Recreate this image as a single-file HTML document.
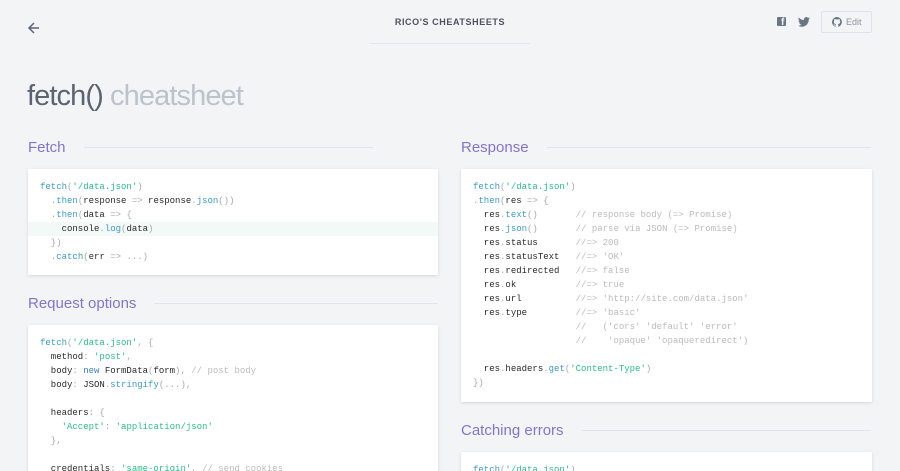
<!DOCTYPE html>
<html><head><meta charset="utf-8"><style>
*{margin:0;padding:0;box-sizing:border-box}
html,body{width:900px;height:471px;overflow:hidden}
body{background:#f3f4f6;font-family:"Liberation Sans",sans-serif;position:relative}
.abs{position:absolute}
.h{position:absolute;font-size:15px;color:#8474cc;display:flex;align-items:center}
.h i{display:block;height:1px;background:#e2e4ea;margin-left:18px;flex:1}
.card{position:absolute;background:#fff;box-shadow:0 1px 3px rgba(0,0,0,.12);padding:11px 0 0 0;font-family:"Liberation Mono",monospace;font-size:9px;line-height:14px;color:#2a2a2a;white-space:pre;overflow:hidden}
.card div{padding-left:12px}
.f{color:#3b9bc4}.s{color:#2cba8c}.p{color:#aaa}.c{color:#bbb}.k{color:#3b7fc4}
.hl{background:#f2f9f6}
</style></head><body>
<svg class="abs" style="left:27px;top:21px" width="14" height="14" viewBox="0 0 14 14"><path d="M12 7H2M7 2L2 7l5 5" stroke="#5a6575" stroke-width="1.5" fill="none"/></svg>
<div class="abs" style="left:0;width:900px;top:17px;text-align:center;font-size:9px;font-weight:bold;letter-spacing:.6px;color:#4a5361">RICO'S CHEATSHEETS</div>
<div class="abs" style="left:370px;top:43px;width:160px;height:1px;background:#e4e6ea"></div>
<div class="abs" style="left:777px;top:17px;width:9px;height:9px;background:#6b7685;border-radius:1px;overflow:hidden"><span style="position:absolute;left:4px;top:0;font-size:10px;font-weight:bold;color:#f3f4f6;line-height:11px">f</span></div>
<svg class="abs" style="left:798px;top:17px" width="12" height="10" viewBox="0 0 24 20"><path d="M24 2.4a10 10 0 01-2.8.8A5 5 0 0023.3.5a10 10 0 01-3.1 1.2A4.9 4.9 0 0011.8 6 14 14 0 011.7.9a4.9 4.9 0 001.5 6.6A4.9 4.9 0 011 6.9a4.9 4.9 0 003.9 4.9 5 5 0 01-2.2.1 4.9 4.9 0 004.6 3.4A9.9 9.9 0 010 17.3 14 14 0 007.5 19.5c9.1 0 14-7.5 14-14v-.6A10 10 0 0024 2.4z" fill="#6b7685"/></svg>
<div class="abs" style="left:821px;top:11px;width:51px;height:22px;border:1px solid #dfe2e7;border-radius:2px;font-size:9px;color:#8a939f;line-height:20px;padding-left:24px">Edit</div>
<svg class="abs" style="left:832px;top:17px" width="10" height="10" viewBox="0 0 16 16"><path d="M8 0a8 8 0 00-2.5 15.6c.4 0 .5-.2.5-.4v-1.5c-2.2.5-2.7-1-2.7-1-.4-.9-.9-1.2-.9-1.2-.7-.5.1-.5.1-.5.8.1 1.2.8 1.2.8.7 1.3 1.9.9 2.3.7.1-.5.3-.9.5-1.1-1.8-.2-3.6-.9-3.6-4 0-.9.3-1.6.8-2.1-.1-.2-.4-1 .1-2.1 0 0 .7-.2 2.2.8a7.5 7.5 0 014 0c1.5-1 2.2-.8 2.2-.8.4 1.1.2 1.9.1 2.1.5.6.8 1.3.8 2.1 0 3.1-1.9 3.8-3.6 4 .3.3.5.8.5 1.5v2.2c0 .2.1.5.6.4A8 8 0 008 0z" fill="#6b7685"/></svg>
<div class="abs" style="left:27px;top:80px;font-size:29px;letter-spacing:-.9px;color:#5a6472">fetch() <span style="color:#bcc3cd">cheatsheet</span></div>

<div class="h" style="left:28px;top:139px;width:345px">Fetch<i></i></div>
<div class="card" style="left:28px;top:169px;width:410px;height:106px"><div><span class="f">fetch</span><span class="p">(</span><span class="s">'/data.json'</span><span class="p">)</span></div><div>  <span class="f"><span class="p">.</span>then</span><span class="p">(</span>response <span class="p">=&gt;</span> response<span class="p">.</span><span class="f">json</span><span class="p">())</span></div><div>  <span class="f"><span class="p">.</span>then</span><span class="p">(</span>data <span class="p">=&gt; {</span></div><div class="hl">    console<span class="p">.</span><span class="f">log</span><span class="p">(</span>data<span class="p">)</span></div><div class="p">  })</div><div>  <span class="f"><span class="p">.</span>catch</span><span class="p">(</span>err <span class="p">=&gt; ...)</span></div></div>

<div class="h" style="left:28px;top:295px;width:410px">Request options<i></i></div>
<div class="card" style="left:28px;top:325px;width:410px;height:160px"><div><span class="f">fetch</span><span class="p">(</span><span class="s">'/data.json'</span><span class="p">, {</span></div><div>  method<span class="p">:</span> <span class="s">'post'</span><span class="p">,</span></div><div>  body<span class="p">:</span> <span class="k">new</span> FormData<span class="p">(</span>form<span class="p">),</span> <span class="c">// post body</span></div><div>  body<span class="p">:</span> JSON<span class="p">.</span><span class="f">stringify</span><span class="p">(...),</span></div><div> </div><div>  headers<span class="p">: {</span></div><div>    <span class="s">'Accept'</span><span class="p">:</span> <span class="s">'application/json'</span></div><div class="p">  },</div><div> </div><div>  credentials<span class="p">:</span> <span class="s">'same-origin'</span><span class="p">,</span> <span class="c">// send cookies</span></div></div>

<div class="h" style="left:461px;top:139px;width:410px">Response<i></i></div>
<div class="card" style="left:461px;top:169px;width:411px;height:233px"><div><span class="f">fetch</span><span class="p">(</span><span class="s">'/data.json'</span><span class="p">)</span></div><div><span class="f"><span class="p">.</span>then</span><span class="p">(</span>res <span class="p">=&gt; {</span></div><div>  res<span class="p">.</span><span class="f">text</span><span class="p">()</span>       <span class="c">// response body (=&gt; Promise)</span></div><div>  res<span class="p">.</span><span class="f">json</span><span class="p">()</span>       <span class="c">// parse via JSON (=&gt; Promise)</span></div><div>  res<span class="p">.</span>status       <span class="c">//=&gt; 200</span></div><div>  res<span class="p">.</span>statusText   <span class="c">//=&gt; 'OK'</span></div><div>  res<span class="p">.</span>redirected   <span class="c">//=&gt; false</span></div><div>  res<span class="p">.</span>ok           <span class="c">//=&gt; true</span></div><div>  res<span class="p">.</span>url          <span class="c">//=&gt; 'http://site.com/data.json'</span></div><div>  res<span class="p">.</span>type         <span class="c">//=&gt; 'basic'</span></div><div>                   <span class="c">//   ('cors' 'default' 'error'</span></div><div>                   <span class="c">//    'opaque' 'opaqueredirect')</span></div><div> </div><div>  res<span class="p">.</span>headers<span class="p">.</span><span class="f">get</span><span class="p">(</span><span class="s">'Content-Type'</span><span class="p">)</span></div><div class="p">})</div></div>

<div class="h" style="left:461px;top:422px;width:410px">Catching errors<i></i></div>
<div class="card" style="left:461px;top:452px;width:411px;height:40px"><div><span class="f">fetch</span><span class="p">(</span><span class="s">'/data.json'</span><span class="p">)</span></div></div>
</body></html>
